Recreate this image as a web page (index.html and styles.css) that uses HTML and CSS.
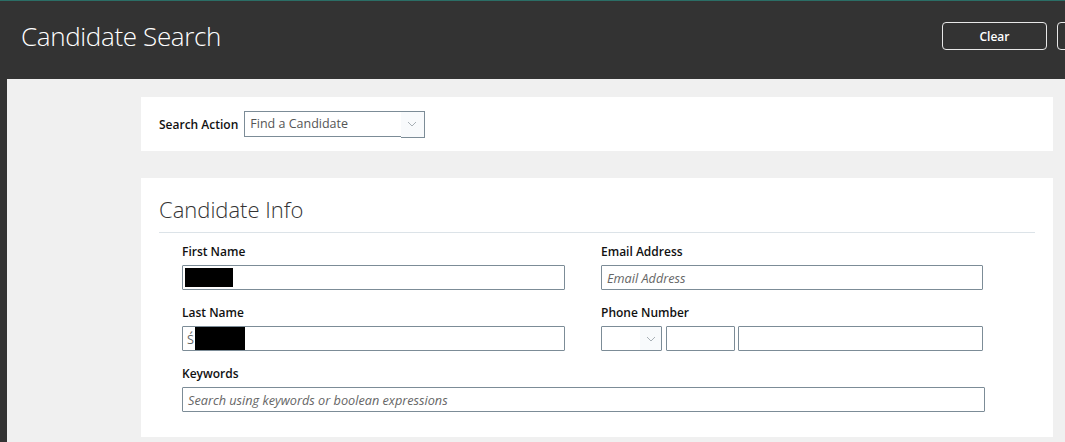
FILE: index.html
```html
<!DOCTYPE html>
<html lang="en">
<head>
<meta charset="utf-8">
<title>Candidate Search</title>
<link rel="stylesheet" href="styles.css">
</head>
<body>
<header class="topbar">
  <h1 class="page-title">Candidate Search</h1>
  <div class="actions">
    <button class="btn-outline" type="button">Clear</button>
    <button class="btn-outline" type="button" aria-label="Search"></button>
  </div>
</header>
<div class="layout">
  <div class="rail"></div>
  <main class="content">
    <section class="card action-card">
      <span class="action-label">Search Action</span>
      <div class="select">
        <span class="select-text">Find a Candidate</span>
        <span class="select-arrow">
          <svg width="10" height="6" viewBox="0 0 10 6"><path d="M1 1l4 4 4-4" fill="none" stroke="#a8b0b6" stroke-width="1"/></svg>
        </span>
      </div>
    </section>
    <section class="card info-card">
      <h2 class="section-title">Candidate Info</h2>
      <div class="fields">
        <div class="field">
          <label class="field-label">First Name</label>
          <div class="input"><span class="redact redact-first"></span></div>
        </div>
        <div class="field">
          <label class="field-label">Email Address</label>
          <div class="input"><span class="placeholder">Email Address</span></div>
        </div>
        <div class="field">
          <label class="field-label">Last Name</label>
          <div class="input"><span class="value">Ś</span><span class="redact redact-last"></span></div>
        </div>
        <div class="field">
          <label class="field-label">Phone Number</label>
          <div class="phone-row">
            <div class="input phone-code">
              <span class="phone-arrow"><svg width="10" height="6" viewBox="0 0 10 6"><path d="M1 1l4 4 4-4" fill="none" stroke="#a8b0b6" stroke-width="1"/></svg></span>
            </div>
            <div class="input phone-area"></div>
            <div class="input phone-num"></div>
          </div>
        </div>
        <div class="field field-wide">
          <label class="field-label">Keywords</label>
          <div class="input"><span class="placeholder">Search using keywords or boolean expressions</span></div>
        </div>
      </div>
    </section>
  </main>
</div>
</body>
</html>
```

FILE: styles.css
```css
* { box-sizing: border-box; }
html, body { margin: 0; padding: 0; }
body {
  background: #f0f0f0;
  font-family: "Open Sans", "Noto Sans", sans-serif;
  color: #1b1b1b;
  overflow: hidden;
  height: 442px;
}
.topbar {
  height: 79px;
  background: #333333;
  border-top: 1px solid #2b6e66;
  display: grid;
  grid-template-columns: 921px auto;
  align-items: center;
  padding-left: 21px;
  overflow: hidden;
  white-space: nowrap;
}
.page-title {
  margin: 0;
  font-family: "Open Sans", sans-serif;
  font-weight: 300;
  font-size: 26px;
  color: #ffffff;
  letter-spacing: -0.35px;
  padding-bottom: 8px;
}
.actions {
  display: flex;
  gap: 10px;
  margin-top: -8px;
}
.btn-outline {
  width: 105px;
  height: 28px;
  background: transparent;
  border: 1px solid #e8e8e8;
  border-radius: 4px;
  color: #ffffff;
  font-family: "Open Sans", sans-serif;
  font-weight: 600;
  font-size: 12px;
  flex: none;
}
.layout {
  display: flex;
  height: 363px;
}
.rail {
  width: 7px;
  background: #333333;
  flex: none;
}
.content {
  flex: 1;
  padding: 18px 12px 0 134px;
}
.card {
  background: #ffffff;
}
.action-card {
  height: 54px;
  display: flex;
  align-items: center;
  padding: 0 18px;
  gap: 6px;
}
.action-label {
  font-size: 12px;
  font-weight: 600;
  color: #111;
}
.select {
  display: flex;
  align-items: flex-start;
  height: 27px;
}
.select-text {
  width: 157px;
  height: 26px;
  border: 1px solid #7c8c97;
  border-right: none;
  font-size: 12.5px;
  color: #555;
  line-height: 24px;
  padding-left: 5px;
}
.select-arrow {
  width: 24px;
  height: 27px;
  border: 1px solid #7c8c97;
  border-left: none;
  background: #f8fafc;
  display: flex;
  align-items: center;
  justify-content: center;
  padding-bottom: 1px;
  padding-right: 2px;
}
.info-card {
  margin-top: 27px;
  padding: 16px 18px 25px 18px;
}
.section-title {
  margin: 0;
  font-weight: 300;
  font-size: 22px;
  line-height: 30px;
  color: #333;
  padding-bottom: 8px;
  border-bottom: 1px solid #dce3e8;
}
.fields {
  display: grid;
  grid-template-columns: 383px 382px;
  column-gap: 36px;
  row-gap: 14px;
  padding: 10px 0 0 23px;
}
.field-wide {
  grid-column: 1 / span 2;
  width: 803px;
}
.field-label {
  display: block;
  font-size: 12px;
  font-weight: 600;
  line-height: 16px;
  padding-top: 1px;
  margin-bottom: 5px;
  color: #111;
}
.input {
  height: 25px;
  border: 1px solid #7c8c97;
  border-radius: 1px;
  display: flex;
  align-items: center;
  padding-left: 2px;
  font-size: 12.7px;
}
.placeholder {
  font-style: italic;
  color: #666;
  padding-left: 3px;
}
.value {
  color: #666;
  padding-left: 2px;
  padding-right: 1px;
}
.redact {
  background: #000;
  display: block;
}
.redact-first { width: 48px; height: 19px; }
.redact-last { width: 50px; height: 23px; }
.phone-row {
  display: flex;
  gap: 4px;
}
.phone-code {
  width: 61px;
  justify-content: flex-end;
  padding: 0;
}
.phone-arrow {
  width: 21px;
  height: 100%;
  background: #f8fafc;
  display: flex;
  align-items: center;
  justify-content: center;
}
.phone-area { width: 69px; }
.phone-num { flex: 1; margin-left: -1px; }
```
